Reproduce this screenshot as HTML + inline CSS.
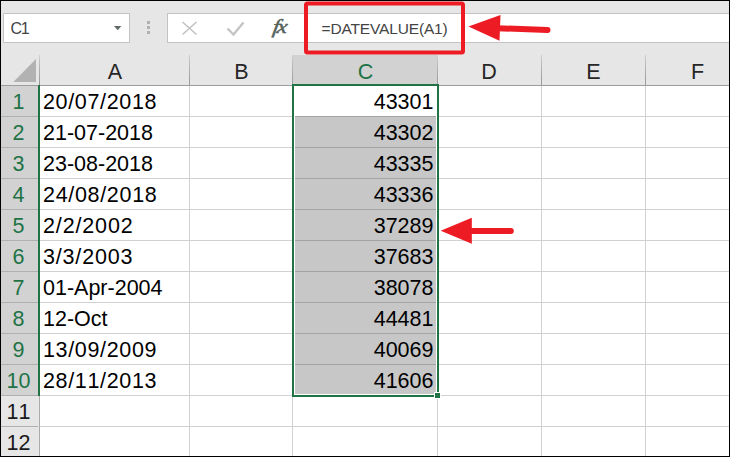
<!DOCTYPE html>
<html lang="en">
<head>
<meta charset="utf-8">
<title>DATEVALUE</title>
<style>
html,body{margin:0;padding:0;}
html{background:#fff;}
body{width:730px;height:457px;overflow:hidden;background:#000;position:relative;font-family:"Liberation Sans",sans-serif;}
#app{position:absolute;left:1px;top:1px;width:728px;height:455px;background:#fff;overflow:hidden;}
.abs{position:absolute;}
/* coordinates inside #app are target coords minus 1 */
#bar{left:0;top:0;width:728px;height:84px;background:#e6e6e6;}
.box{background:#fff;border:1px solid #c3c3c3;box-sizing:border-box;}
.t{position:absolute;white-space:nowrap;line-height:1;}
.hl{position:absolute;height:1px;background:#d1d1d1;left:0;width:728px;}
.vl{position:absolute;width:1px;background:#d1d1d1;top:85px;height:370px;}
.hs{position:absolute;width:1px;background:linear-gradient(#d0d0d0,#b4b4b4 40%,#989898);top:54px;height:30px;}
.ch{position:absolute;top:58.5px;font-size:21.5px;color:#262626;text-align:center;line-height:24px;}
.rh{position:absolute;left:0;width:37px;box-sizing:border-box;padding-right:2px;font-size:21.5px;text-align:center;line-height:31px;height:30px;overflow:hidden;transform:translateY(0.5px);}
.rs{color:#217346;}
.rn{color:#1a1a1a;}
.ca{position:absolute;left:42px;font-size:21.5px;color:#000;line-height:31px;height:30px;white-space:nowrap;}
.cc{position:absolute;left:294px;width:138.5px;text-align:right;font-size:21.5px;color:#000;line-height:31px;height:30px;white-space:nowrap;}
.ca,.cc,.rh,.ch{font-kerning:none;}
.ca,.cc{margin-top:1px;}
</style>
</head>
<body>
<div id="app">
  <div id="bar" class="abs"></div>
  <!-- name box -->
  <div class="abs box" style="left:2px;top:12px;width:127px;height:30px;"></div>
  <div class="t" style="left:9.5px;top:20px;font-size:16px;color:#444;letter-spacing:-1.3px;">C1</div>
  <svg class="abs" style="left:112px;top:24px;" width="10" height="6"><path d="M1 1 L8.4 1 L4.7 5.2 Z" fill="#606b64"/></svg>
  <div class="abs" style="left:146px;top:20px;width:3px;height:3px;background:#b1b1b1;box-shadow:0 5px 0 #b1b1b1,0 10px 0 #b1b1b1;"></div>
  <!-- buttons box -->
  <div class="abs box" style="left:166px;top:12px;width:140px;height:30px;border-right:none;"></div>
  <svg class="abs" style="left:178px;top:18px;" width="24" height="20"><path d="M3.5 3 L17.5 15.5 M17.5 3 L3.5 15.5" stroke="#c2c2c2" stroke-width="1.6" fill="none"/></svg>
  <svg class="abs" style="left:222px;top:18px;" width="26" height="20"><path d="M4.5 9.5 L10.5 15.5 L20.5 3.5" stroke="#c4c4c4" stroke-width="2.4" fill="none"/></svg>
  <div class="t" style="left:270px;top:13.5px;font-family:'Liberation Serif',serif;font-style:italic;font-size:18.5px;color:#55625b;line-height:24px;letter-spacing:-1.8px;-webkit-text-stroke:0.45px #55625b;transform:skewX(-9deg) scale(1.26,1.07);transform-origin:0 100%;">fx</div>
  <!-- formula input -->
  <div class="abs box" style="left:306px;top:12px;width:424px;height:30px;border-left:none;"></div>
  <div class="t" style="left:320.5px;top:19.5px;font-size:15.5px;letter-spacing:-0.15px;color:#444;">=DATEVALUE(A1)</div>

  <!-- column headers -->
  <div class="abs" style="left:292px;top:54px;width:144px;height:30px;background:#d2d2d2;"></div>
  <svg class="abs" style="left:11px;top:57px;" width="26" height="26"><path d="M1.3 24.1 L24 24.1 L24 0.9 Z" fill="#b2b2b2"/></svg>
  <div class="hs" style="left:38px;"></div>
  <div class="hs" style="left:188px;"></div>
  <div class="hs" style="left:291px;"></div>
  <div class="hs" style="left:436px;"></div>
  <div class="hs" style="left:540px;"></div>
  <div class="hs" style="left:644px;"></div>
  <div class="ch" style="left:39px;width:150px;">A</div>
  <div class="ch" style="left:189px;width:103px;">B</div>
  <div class="ch" style="left:292px;width:145px;color:#217346;">C</div>
  <div class="ch" style="left:437px;width:102px;">D</div>
  <div class="ch" style="left:541px;width:103px;">E</div>
  <div class="ch" style="left:645px;width:103px;">F</div>
  <div class="abs" style="left:0;top:84px;width:728px;height:1px;background:#9d9d9d;"></div>

  <!-- gridlines -->
  <div class="vl" style="left:188px;"></div>
  <div class="vl" style="left:291px;"></div>
  <div class="vl" style="left:436px;"></div>
  <div class="vl" style="left:540px;"></div>
  <div class="vl" style="left:644px;"></div>
  <div class="hl" style="top:115px;"></div>
  <div class="hl" style="top:146px;"></div>
  <div class="hl" style="top:177px;"></div>
  <div class="hl" style="top:208px;"></div>
  <div class="hl" style="top:239px;"></div>
  <div class="hl" style="top:270px;"></div>
  <div class="hl" style="top:301px;"></div>
  <div class="hl" style="top:332px;"></div>
  <div class="hl" style="top:363px;"></div>
  <div class="hl" style="top:394px;"></div>
  <div class="hl" style="top:425px;"></div>

  <!-- selection fill -->
  <div class="abs" style="left:294px;top:115px;width:141px;height:278px;background:#c7c7c7;"></div>
  <div class="abs" style="left:294px;top:115px;width:141px;height:1px;background:#a4a4a4;"></div>
  <div class="abs" style="left:294px;top:146px;width:141px;height:1px;background:#a4a4a4;"></div>
  <div class="abs" style="left:294px;top:177px;width:141px;height:1px;background:#a4a4a4;"></div>
  <div class="abs" style="left:294px;top:208px;width:141px;height:1px;background:#a4a4a4;"></div>
  <div class="abs" style="left:294px;top:239px;width:141px;height:1px;background:#a4a4a4;"></div>
  <div class="abs" style="left:294px;top:270px;width:141px;height:1px;background:#a4a4a4;"></div>
  <div class="abs" style="left:294px;top:301px;width:141px;height:1px;background:#a4a4a4;"></div>
  <div class="abs" style="left:294px;top:332px;width:141px;height:1px;background:#a4a4a4;"></div>
  <div class="abs" style="left:294px;top:363px;width:141px;height:1px;background:#a4a4a4;"></div>

  <!-- row headers -->
  <div class="abs" style="left:0;top:85px;width:37px;height:310px;background:#d2d2d2;"></div>
  <div class="abs" style="left:0;top:395px;width:38px;height:60px;background:#e6e6e6;"></div>
  <div class="rh rs" style="top:85px;">1</div>
  <div class="rh rs" style="top:116px;">2</div>
  <div class="rh rs" style="top:147px;">3</div>
  <div class="rh rs" style="top:178px;">4</div>
  <div class="rh rs" style="top:209px;">5</div>
  <div class="rh rs" style="top:240px;">6</div>
  <div class="rh rs" style="top:271px;">7</div>
  <div class="rh rs" style="top:302px;">8</div>
  <div class="rh rs" style="top:333px;">9</div>
  <div class="rh rs" style="top:364px;">10</div>
  <div class="rh rn" style="top:395px;">11</div>
  <div class="rh rn" style="top:426px;">12</div>
  <div class="abs" style="left:0;top:115px;width:37px;height:1px;background:#b0b0b0;box-shadow:0 31px 0 #b0b0b0,0 62px 0 #b0b0b0,0 93px 0 #b0b0b0,0 124px 0 #b0b0b0,0 155px 0 #b0b0b0,0 186px 0 #b0b0b0,0 217px 0 #b0b0b0,0 248px 0 #b0b0b0,0 279px 0 #b0b0b0,0 310px 0 #b0b0b0;"></div>
  <div class="abs" style="left:38px;top:395px;width:1px;height:60px;background:#ababab;"></div>
  <div class="abs" style="left:37px;top:84px;width:2px;height:311px;background:#217346;"></div>

  <!-- column A -->
  <div class="ca" style="top:85px;letter-spacing:0.65px;">20/07/2018</div>
  <div class="ca" style="top:116px;">21-07-2018</div>
  <div class="ca" style="top:147px;">23-08-2018</div>
  <div class="ca" style="top:178px;letter-spacing:0.68px;">24/08/2018</div>
  <div class="ca" style="top:209px;letter-spacing:0.85px;">2/2/2002</div>
  <div class="ca" style="top:240px;letter-spacing:0.82px;">3/3/2003</div>
  <div class="ca" style="top:271px;">01-Apr-2004</div>
  <div class="ca" style="top:302px;">12-Oct</div>
  <div class="ca" style="top:333px;letter-spacing:0.65px;">13/09/2009</div>
  <div class="ca" style="top:364px;letter-spacing:0.65px;">28/11/2013</div>

  <!-- column C -->
  <div class="cc" style="top:85px;">43301</div>
  <div class="cc" style="top:116px;">43302</div>
  <div class="cc" style="top:147px;">43335</div>
  <div class="cc" style="top:178px;">43336</div>
  <div class="cc" style="top:209px;">37289</div>
  <div class="cc" style="top:240px;">37683</div>
  <div class="cc" style="top:271px;">38078</div>
  <div class="cc" style="top:302px;">44481</div>
  <div class="cc" style="top:333px;">40069</div>
  <div class="cc" style="top:364px;">41606</div>

  <!-- selection outline -->
  <div class="abs" style="left:293px;top:85px;width:1px;height:309px;background:#fff;"></div>
  <div class="abs" style="left:435px;top:85px;width:1px;height:309px;background:#fff;"></div>
  <div class="abs" style="left:291px;top:83px;width:147px;height:313px;box-sizing:border-box;border:2px solid #217346;"></div>
  <div class="abs" style="left:433px;top:391px;width:7px;height:7px;background:#fff;"></div>
  <div class="abs" style="left:434px;top:392px;width:5px;height:5px;background:#217346;"></div>

  <!-- red annotations -->
  <svg class="abs" style="left:0;top:0;" width="728" height="455">
    <rect x="305" y="2.5" width="157" height="49" rx="1.5" ry="1.5" fill="none" stroke="#ed1c24" stroke-width="4"/>
    <path d="M467.4 25.4 L499.5 14.1 L498.5 39.8 Z" fill="#ed1c24"/>
    <path d="M496 27.2 L546.5 28.9" stroke="#ed1c24" stroke-width="6" stroke-linecap="round" fill="none"/>
    <path d="M439.7 229.8 L470.8 216.7 L470.8 242.8 Z" fill="#ed1c24"/>
    <path d="M468 230 L509.8 230" stroke="#ed1c24" stroke-width="6" stroke-linecap="round" fill="none"/>
  </svg>
</div>
</body>
</html>
